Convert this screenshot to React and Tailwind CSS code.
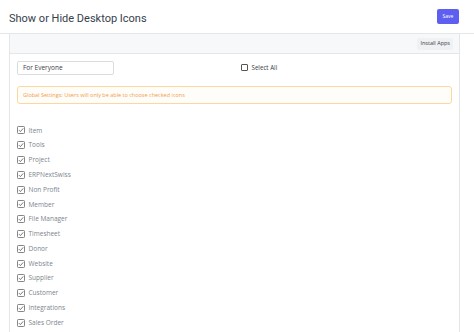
import React from "react";

const items = [
  "Item","Tools","Project","ERPNextSwiss","Non Profit","Member","File Manager","Timesheet","Donor","Website","Supplier","Customer","Integrations","Sales Order",
];

function CheckedBox() {
  return (
    <svg width="8" height="8" viewBox="0 0 8 8" className="shrink-0">
      <rect x="0.5" y="0.5" width="7" height="7" rx="0.8" fill="white" stroke="#777" strokeWidth="0.9" />
      <path d="M1.9 4.1 L3.4 5.6 L6.2 2.4" fill="none" stroke="#666" strokeWidth="0.9" />
    </svg>
  );
}

export default function App() {
  return (
    <div className="w-[474px] h-[332px] overflow-hidden bg-white" style={{ fontFamily: '"Open Sans", "Noto Sans", sans-serif' }}>
      <div className="h-[34px] border-b border-[#e4e7ea] flex justify-between pl-[9px] pr-[15px]">
        <div className="text-[11px] text-[#36414c] pt-[11px] leading-[16px] font-['Roboto',sans-serif]">Show or Hide Desktop Icons</div>
        <div className="pt-[9px]">
          <button className="w-[22px] h-[15px] bg-[#5e5ff0] text-white text-[5px] rounded-[2px] flex items-center justify-center">Save</button>
        </div>
      </div>
      <div className="ml-[9px] w-[451px] border-x border-[#e4e7ea] h-[298px]">
        <div className="h-[20px] bg-[#f7f8fa] border-b border-[#e4e7ea] flex items-center justify-end pr-[6px]">
          <div className="h-[12px] px-[3px] bg-[#eff1f3] rounded-[2px] text-[5.5px] text-[#3a4049] flex items-center">Install Apps</div>
        </div>
        <div className="px-[7px] pt-[7px]">
          <div className="grid grid-cols-2 items-center">
            <div className="w-[97px] h-[14px] border border-[#d8dde2] rounded-[2px] flex items-center pl-[5px] text-[6.5px] text-[#3a4049]">For Everyone</div>
            <div className="flex items-center gap-[4px] pl-[6px] text-[6.2px] text-[#3a4049]">
              <span className="w-[7px] h-[7px] border border-[#555] rounded-[1px] bg-white"></span>
              <span>Select All</span>
            </div>
          </div>
          <div className="mt-[11px] h-[18px] border border-[#fbd89c] bg-[#fffdf9] rounded-[3px] flex items-center pl-[5px] text-[5.5px] text-[#f0a04b]">
            Global Settings: Users will only be able to choose checked icons
          </div>
          <div className="mt-[19px] flex flex-col">
            {items.map((t) => (
              <div key={t} className="h-[14.8px] flex items-center gap-[3.5px] text-[6.5px] text-[#7b858f]">
                <CheckedBox />
                <span>{t}</span>
              </div>
            ))}
          </div>
        </div>
      </div>
    </div>
  );
}
